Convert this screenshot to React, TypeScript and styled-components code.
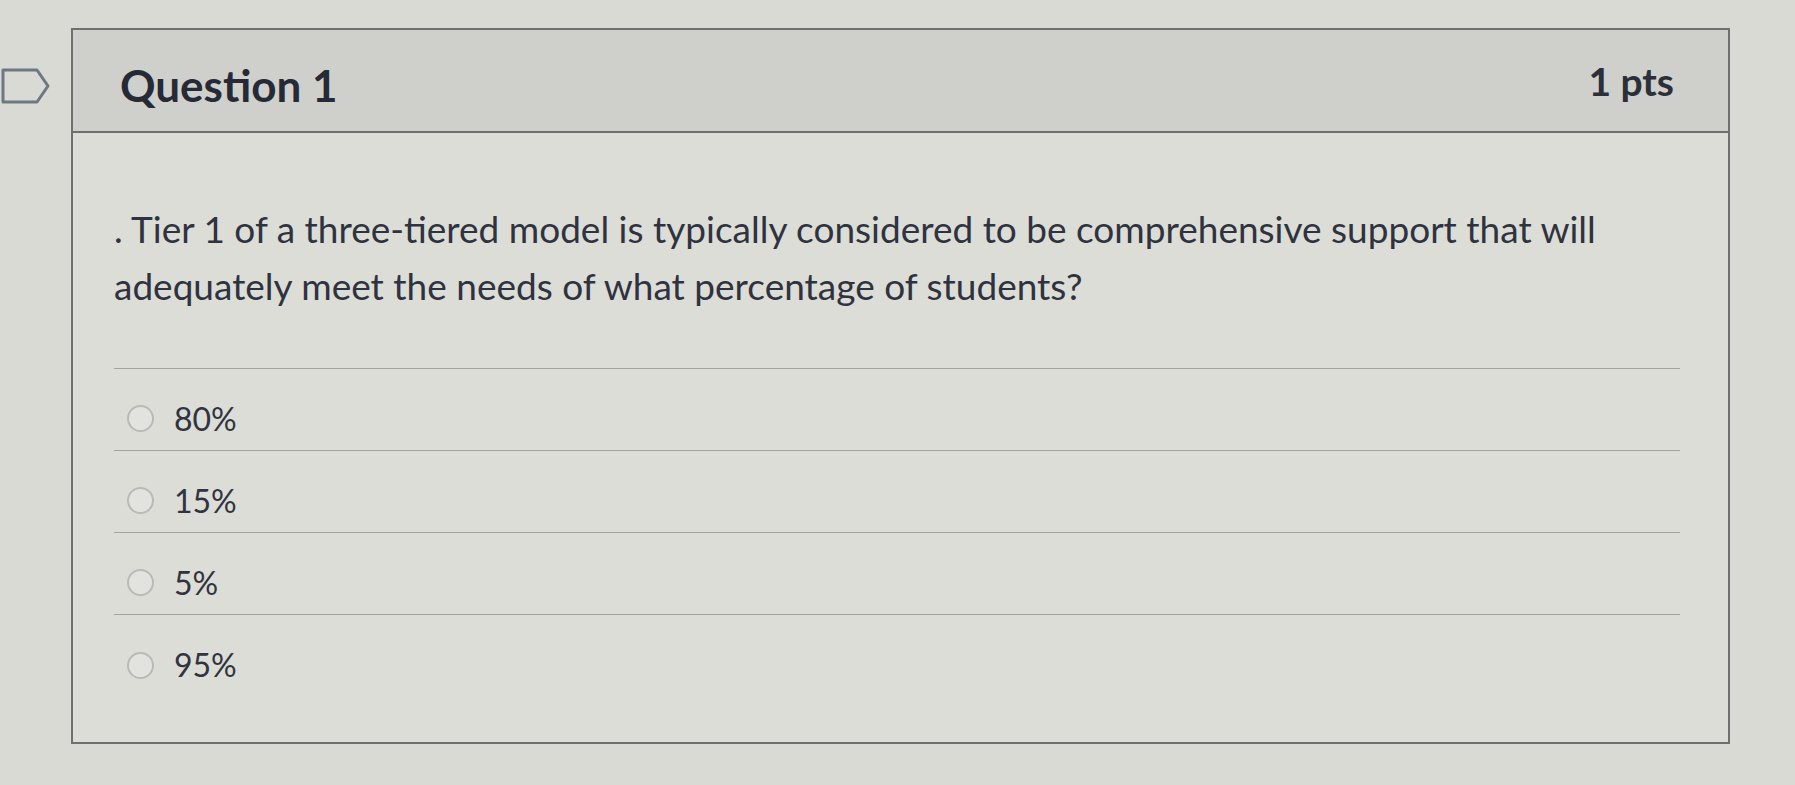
import React from 'react';
import styled, { createGlobalStyle } from 'styled-components';

const GlobalStyle = createGlobalStyle`
  html, body {
    margin: 0;
    padding: 0;
    background: #d9dad4;
    font-family: Lato, "Liberation Sans", sans-serif;
  }
`;

const Page = styled.div`
  display: flex;
  align-items: flex-start;
  padding-top: 28px;
  height: 785px;
  box-sizing: border-box;
`;

const FlagColumn = styled.div`
  width: 71px;
  flex-shrink: 0;
  padding-top: 39px;
`;

const Card = styled.div`
  width: 1659px;
  border: 2px solid #6f706d;
  background: #dcddd7;
  box-sizing: border-box;
`;

const Header = styled.div`
  display: flex;
  align-items: center;
  justify-content: space-between;
  height: 101px;
  padding: 0 54px 0 47px;
  background: #cfd0cb;
  border-bottom: 2px solid #6f706d;
`;

const Title = styled.h2`
  margin: 8px 0 0;
  font-size: 44px;
  font-weight: 700;
  color: #262a36;
`;

const Points = styled.span`
  font-size: 39px;
  font-weight: 700;
  color: #2b2f3a;
`;

const Body = styled.div`
  padding: 67px 48px 45px 41px;
`;

const QuestionText = styled.p`
  margin: 0 0 54px;
  font-size: 37px;
  line-height: 57px;
  color: #2f3340;
  padding-right: 40px;
`;

const Answers = styled.div`
  border-top: 1px solid #a3a49f;
`;

// last row has no divider under it
const AnswerRow = styled.label<{ last?: boolean }>`
  display: flex;
  align-items: center;
  gap: 20px;
  height: 82px;
  padding: 33px 0 15px 13px;
  box-sizing: border-box;
  border-bottom: ${p => (p.last ? 'none' : '1px solid #a3a49f')};
`;

const Radio = styled.span`
  width: 23px;
  height: 23px;
  border-radius: 50%;
  border: 2px solid #b9bab5;
  background: #e2e3de;
  flex-shrink: 0;
`;

const AnswerText = styled.span`
  font-size: 32px;
  line-height: 34px;
  color: #30343f;
`;

const FlagIcon = () => (
  <svg width="52" height="38" viewBox="0 0 52 38">
    <path
      d="M3 3 H37 L48 19 L37 35 H3 Z"
      fill="none"
      stroke="#6e7783"
      strokeWidth="3"
      strokeLinejoin="round"
    />
  </svg>
);

const answers = ['80%', '15%', '5%', '95%'];

export default function App() {
  return (
    <>
      <GlobalStyle />
      <Page>
        <FlagColumn>
          <FlagIcon />
        </FlagColumn>
        <Card>
          <Header>
            <Title>Question 1</Title>
            <Points>1 pts</Points>
          </Header>
          <Body>
            <QuestionText>
              . Tier 1 of a three-tiered model is typically considered to be comprehensive support that will
              adequately meet the needs of what percentage of students?
            </QuestionText>
            <Answers>
              {answers.map((a, i) => (
                <AnswerRow key={a} last={i === answers.length - 1}>
                  <Radio />
                  <AnswerText>{a}</AnswerText>
                </AnswerRow>
              ))}
            </Answers>
          </Body>
        </Card>
      </Page>
    </>
  );
}
